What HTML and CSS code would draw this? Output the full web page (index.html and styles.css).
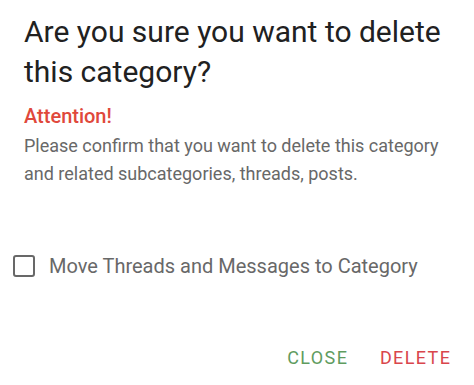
FILE: index.html
```html
<!DOCTYPE html>
<html>
<head>
<meta charset="utf-8">
<link rel="stylesheet" href="styles.css">
</head>
<body>
<div class="dialog">
  <h1 class="title">Are you sure you want to delete this category?</h1>
  <div class="content">
    <div class="attention">Attention!</div>
    <p class="desc">Please confirm that you want to delete this category and related subcategories, threads, posts.</p>
  </div>
  <label class="check">
    <span class="box"></span>
    <span class="label">Move Threads and Messages to Category</span>
  </label>
  <div class="actions">
    <button class="btn close">Close</button>
    <button class="btn delete">Delete</button>
  </div>
</div>
</body>
</html>
```
FILE: styles.css
```css
html, body {
  margin: 0;
  padding: 0;
  background: #ffffff;
}
body {
  font-family: Roboto, "Noto Sans", sans-serif;
  width: 474px;
  height: 385px;
  overflow: hidden;
}
.dialog {
  display: flex;
  flex-direction: column;
}
.title {
  margin: 0;
  padding: 12px 24px 0 24px;
  font-size: 30px;
  line-height: 40px;
  font-weight: 400;
  color: #212121;
}
.content {
  padding: 10px 24px 0 24px;
}
.attention {
  font-size: 20px;
  line-height: 28px;
  font-weight: 500;
  color: #e0483b;
}
.desc {
  margin: 2px 0 0 0;
  font-size: 18px;
  line-height: 28px;
  color: #686868;
}
.check {
  display: flex;
  align-items: center;
  gap: 14px;
  padding: 66px 0 0 13px;
}
.box {
  width: 18px;
  height: 18px;
  border: 2px solid #686868;
  border-radius: 3px;
}
.label {
  font-size: 20px;
  line-height: 24px;
  color: #686868;
}
.actions {
  display: flex;
  justify-content: flex-end;
  gap: 33px;
  padding: 68px 24px 0 0;
}
.btn {
  background: none;
  border: none;
  padding: 0;
  margin: 0;
  font-family: Roboto, sans-serif;
  font-size: 18px;
  line-height: 24px;
  letter-spacing: 1.4px;
  margin-right: -1.4px;
  text-transform: uppercase;
}
.close { color: #5f9c5f; }
.delete { color: #d9464c; }
```
